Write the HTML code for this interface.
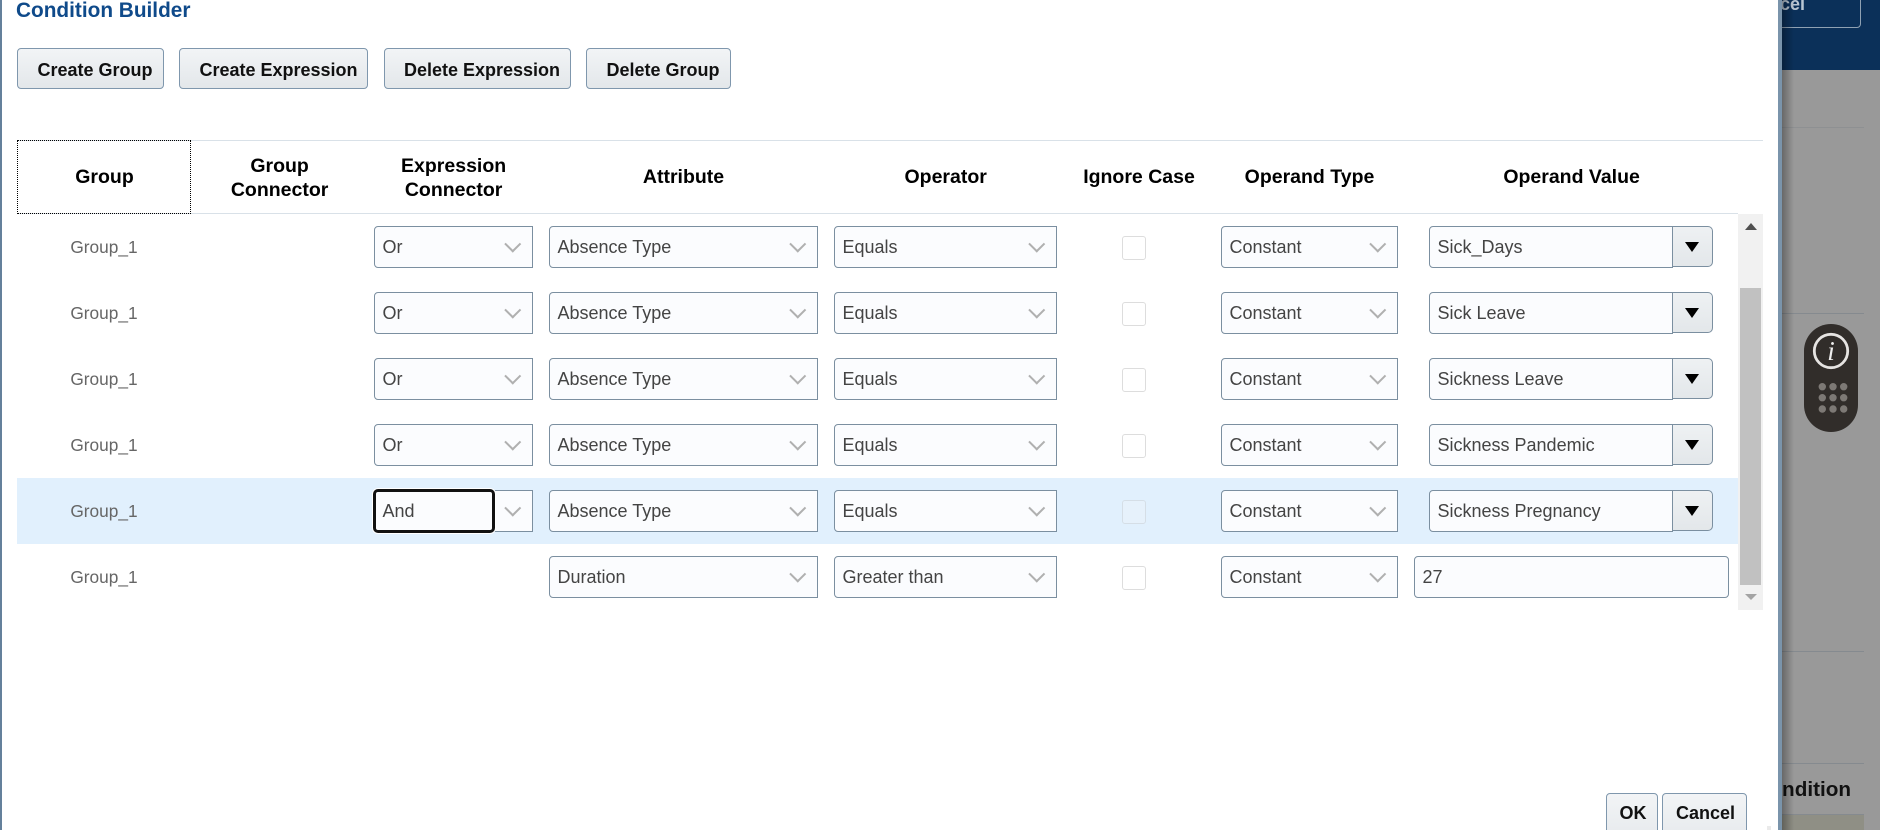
<!DOCTYPE html>
<html lang="en">
<head>
<meta charset="utf-8">
<title>Condition Builder</title>
<style>
html,body{margin:0;padding:0;width:1880px;height:830px;overflow:hidden;background:#999;font-family:"Liberation Sans",Arial,sans-serif}
*{box-sizing:border-box}
.wrap{position:relative;width:1880px;height:830px;overflow:hidden;background:#999}
.abs,.modal,.btn,.th,.row,.sel,.g,.cb,.val,.drop,.num{position:absolute}
.band{position:absolute;left:1700px;top:0;width:180px;height:70px;background:#0b3059}
.bgbtn{position:absolute;left:0;top:-10px;width:161px;height:37.500px;border:1px solid #8fa1b3;border-radius:4px;color:#b9c6d3;font-weight:700;font-size:18px;line-height:26px;text-align:right;padding-right:55px}
.ln{position:absolute;left:1782px;width:82px;height:1px;background:#858a8f}
.modal{left:0;top:0;width:1782px;height:830px;overflow:hidden;background:#fff;border-left:2px solid #64809b;border-right:4px solid #7a94ab}
.shadow{position:absolute;left:1782px;top:0;width:12px;height:830px;background:linear-gradient(90deg,rgba(0,0,0,.32),rgba(0,0,0,0))}
.title{position:absolute;left:14px;top:-2px;font-size:20.800px;line-height:26px;font-weight:700;color:#0f4a8a;white-space:nowrap}
.btn{top:48px;height:41px;border:1px solid #7f97ad;border-radius:4px;background:linear-gradient(#f2f4f6,#e3e7ea);font-size:18px;font-weight:700;line-height:42px;color:#111;text-align:center;white-space:nowrap}
.hl{position:absolute;height:1px;background:#d9e1e8}
.dotbox{position:absolute;left:15px;top:140px;width:174px;height:74px;border:1px dotted #000}
.th{top:141px;height:72px;display:flex;align-items:center;justify-content:center;text-align:center;font-size:19.500px;line-height:24px;font-weight:700;color:#000;transform:translateX(-50%);white-space:nowrap}
.row{left:17px;width:1721px;height:66px}
.row.on{background:#e1f0fd}
.g{left:53px;top:0;height:66px;width:68px;font-size:17.300px;line-height:62px;color:#666;white-space:nowrap;text-align:center}
.sel,.val,.num{top:10px;height:42px;background:#fbfcfe;border:1px solid #7b8fa0;border-radius:4px 0 0 4px;font-size:18px;line-height:40px;color:#444;padding-left:7.500px;white-space:nowrap}
.sel::after{content:"";position:absolute;top:11px;right:14px;width:9.500px;height:9.500px;border-right:2px solid #b0b0b0;border-bottom:2px solid #b0b0b0;transform:rotate(45deg)}
.c1{left:357px;width:159px}
.c2{left:532px;width:269px}
.c3{left:817px;width:223px}
.c4{left:1204px;width:177px}
.val{left:1412px;width:244px}
.drop{left:1655px;top:10px;width:41px;height:41px;border:1px solid #7b8fa0;border-radius:0 5px 5px 0;background:linear-gradient(#eef1f3,#e3e7ea)}
.drop::after{content:"";position:absolute;left:12px;top:15px;border-left:7px solid transparent;border-right:7px solid transparent;border-top:10px solid #000}
.cb{left:1105px;top:20px;width:24px;height:24px;background:#fff;border:1px solid #ddd;border-radius:3px}
.row.on .cb{background:#e6f1fb;border-color:#d5dee6}
.num{left:1397px;width:315px;border-radius:4px}
.focus{position:absolute;left:-2px;top:-2px;width:122px;height:44px;background:#fbfcfe;border:3px solid #111;border-radius:5px;box-shadow:0 0 0 1px #fff;line-height:38px;padding-left:6.500px;z-index:2}
.track{position:absolute;left:1736px;top:214px;width:25px;height:396px;background:#f1f1f1}
.thumb{position:absolute;left:2px;top:74px;width:21px;height:297px;background:#c1c1c1}
.up{position:absolute;left:7px;top:9px;border-left:6px solid transparent;border-right:6px solid transparent;border-bottom:7px solid #505050}
.dn{position:absolute;left:7px;top:380px;border-left:6px solid transparent;border-right:6px solid transparent;border-top:6px solid #a3a3a3}
.dots{position:absolute;left:1765px;top:826px;width:4px;height:4px;background:radial-gradient(#aaa 45%,transparent 50%) 0 0/2px 2px}
</style>
</head>
<body>
<div class="wrap">
<div class="band"><div class="bgbtn">Cancel</div></div>
<div class="ln" style="top:127px;background:#8e9092"></div>
<div class="ln" style="top:313px"></div>
<div class="ln" style="top:651px"></div>
<div class="ln" style="top:763px"></div>
<div class="ln" style="top:814px"></div>
<div class="abs" style="left:1782px;top:815px;width:82px;height:15px;background:#8f8f85"></div>
<div class="abs" style="right:29px;top:777px;font-size:20.700px;line-height:26px;font-weight:700;color:#111;white-space:nowrap">Condition</div>
<div class="shadow"></div>

<svg class="abs" style="left:1804px;top:324px" width="54" height="108" viewBox="0 0 54 108">
<rect x="0" y="0" width="54" height="108" rx="27" fill="#312d2a"/>
<circle cx="27" cy="27" r="16.700" fill="none" stroke="#e6e4e2" stroke-width="2.800"/>
<text x="27" y="36" text-anchor="middle" font-family="Liberation Serif,serif" font-style="italic" font-size="27" fill="#eeeeee">i</text>
<g fill="#7d7975"><circle cx="18.300" cy="62.700" r="3.700"/><circle cx="29" cy="62.700" r="3.700"/><circle cx="39.700" cy="62.700" r="3.700"/><circle cx="18.300" cy="73.700" r="3.700"/><circle cx="29" cy="73.700" r="3.700"/><circle cx="39.700" cy="73.700" r="3.700"/><circle cx="18.300" cy="85" r="3.700"/><circle cx="29" cy="85" r="3.700"/><circle cx="39.700" cy="85" r="3.700"/></g>
</svg>

<div class="modal">
<div class="title">Condition Builder</div>
<div class="btn" style="left:15px;width:147px;text-indent:9px">Create Group</div>
<div class="btn" style="left:177px;width:189px;text-indent:10px">Create Expression</div>
<div class="btn" style="left:382px;width:187px;text-indent:9px">Delete Expression</div>
<div class="btn" style="left:584px;width:145px;text-indent:9px">Delete Group</div>

<div class="hl" style="left:15px;top:140px;width:1746px"></div>
<div class="hl" style="left:15px;top:213px;width:1721px"></div>
<div class="dotbox"></div>
<div class="th" style="left:102.500px">Group</div>
<div class="th" style="left:277.600px;top:142px">Group<br>Connector</div>
<div class="th" style="left:451.600px;top:142px">Expression<br>Connector</div>
<div class="th" style="left:681.500px">Attribute</div>
<div class="th" style="left:943.700px">Operator</div>
<div class="th" style="left:1137px">Ignore Case</div>
<div class="th" style="left:1307.500px">Operand Type</div>
<div class="th" style="left:1569.600px">Operand Value</div>

<div class="row" style="left:15px;top:216px">
<div class="g">Group_1</div><div class="sel c1">Or</div><div class="sel c2">Absence Type</div><div class="sel c3">Equals</div><div class="cb"></div><div class="sel c4">Constant</div><div class="val">Sick_Days</div><div class="drop"></div>
</div>
<div class="row" style="left:15px;top:282px">
<div class="g">Group_1</div><div class="sel c1">Or</div><div class="sel c2">Absence Type</div><div class="sel c3">Equals</div><div class="cb"></div><div class="sel c4">Constant</div><div class="val">Sick Leave</div><div class="drop"></div>
</div>
<div class="row" style="left:15px;top:348px">
<div class="g">Group_1</div><div class="sel c1">Or</div><div class="sel c2">Absence Type</div><div class="sel c3">Equals</div><div class="cb"></div><div class="sel c4">Constant</div><div class="val">Sickness Leave</div><div class="drop"></div>
</div>
<div class="row" style="left:15px;top:414px">
<div class="g">Group_1</div><div class="sel c1">Or</div><div class="sel c2">Absence Type</div><div class="sel c3">Equals</div><div class="cb"></div><div class="sel c4">Constant</div><div class="val">Sickness Pandemic</div><div class="drop"></div>
</div>
<div class="row on" style="left:15px;top:478px;height:66px">
<div class="g" style="top:2px">Group_1</div><div class="sel c1" style="top:12px"><div class="focus">And</div></div><div class="sel c2" style="top:12px">Absence Type</div><div class="sel c3" style="top:12px">Equals</div><div class="cb" style="top:22px"></div><div class="sel c4" style="top:12px">Constant</div><div class="val" style="top:12px">Sickness Pregnancy</div><div class="drop" style="top:12px"></div>
</div>
<div class="row" style="left:15px;top:546px">
<div class="g">Group_1</div><div class="sel c2">Duration</div><div class="sel c3">Greater than</div><div class="cb"></div><div class="sel c4">Constant</div><div class="num">27</div>
</div>

<div class="track"><div class="up"></div><div class="thumb"></div><div class="dn"></div></div>

<div class="btn" style="left:1604px;top:793px;width:52px;height:60px;line-height:38px;text-indent:2px">OK</div>
<div class="btn" style="left:1660px;top:793px;width:85px;height:60px;line-height:38px;text-indent:2px">Cancel</div>
<div class="dots"></div>
</div>
</div>
</body>
</html>
